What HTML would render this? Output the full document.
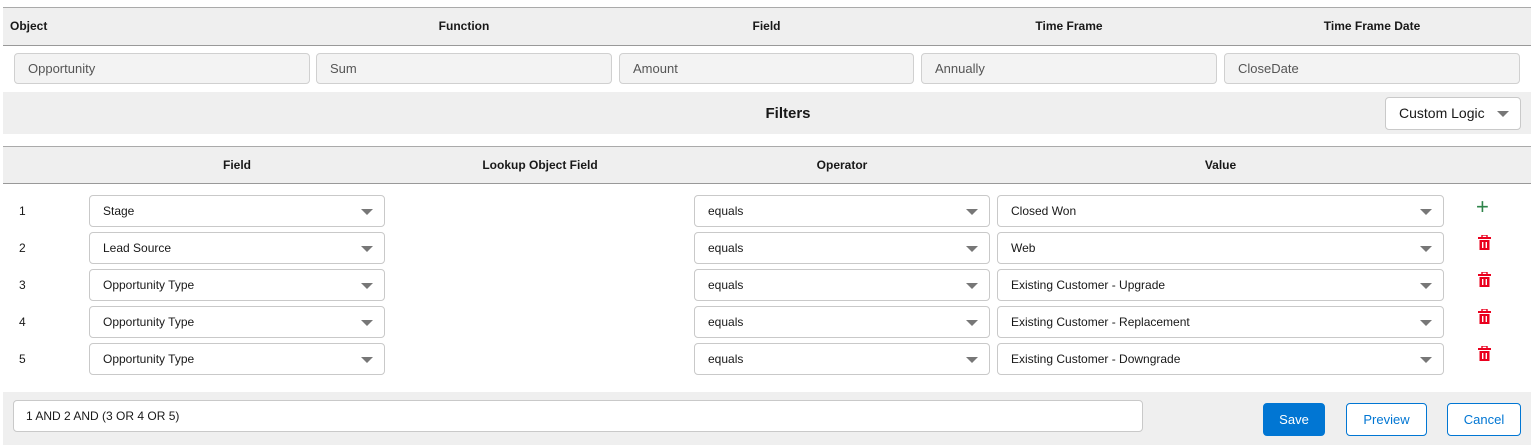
<!DOCTYPE html>
<html><head><style>
body{margin:0;width:1536px;height:445px;background:#fff;font-family:"Liberation Sans",sans-serif;color:#181818;position:relative;overflow:hidden}
.abs{position:absolute}
.band{position:absolute;left:3px;width:1528px;background:#efefef}
.hdr{font-size:12px;font-weight:bold;position:absolute}
.inp{position:absolute;height:31px;border:1px solid #d0d0d0;border-radius:4px;background:#f3f3f3;box-sizing:border-box;font-size:13px;color:#555;padding-left:13px;line-height:30px;top:53px}
.sel{position:absolute;height:32px;border:1px solid #c9c9c9;border-radius:4px;background:#fff;box-sizing:border-box;font-size:12px;color:#181818;padding-left:13px;line-height:30px}
.sel:after{content:"";position:absolute;right:11px;top:13px;border-left:6px solid transparent;border-right:6px solid transparent;border-top:6px solid #777}
.num{position:absolute;left:19px;font-size:12px}
.btn{position:absolute;top:403px;height:33px;box-sizing:border-box;border-radius:4px;font-size:13px;text-align:center;line-height:31px}
</style></head><body>
<div class="band" style="top:7px;height:37px;border-top:1px solid #aaa;border-bottom:1px solid #999"></div>
<div class="hdr" style="left:10px;top:19px">Object</div>
<div class="hdr" style="left:316px;width:296px;text-align:center;top:19px">Function</div>
<div class="hdr" style="left:619px;width:295px;text-align:center;top:19px">Field</div>
<div class="hdr" style="left:921px;width:296px;text-align:center;top:19px">Time Frame</div>
<div class="hdr" style="left:1224px;width:296px;text-align:center;top:19px">Time Frame Date</div>
<div class="inp" style="left:14px;width:296px">Opportunity</div>
<div class="inp" style="left:316px;width:296px">Sum</div>
<div class="inp" style="left:619px;width:295px">Amount</div>
<div class="inp" style="left:921px;width:296px">Annually</div>
<div class="inp" style="left:1224px;width:296px">CloseDate</div>
<div class="band" style="top:92px;height:42px"></div>
<div class="abs" style="left:0;width:1576px;text-align:center;top:105px;font-size:15px;font-weight:bold">Filters</div>
<div class="sel" style="left:1385px;top:97px;width:136px;height:33px;font-size:14px;line-height:31px;border-radius:4px">Custom Logic</div>
<div class="band" style="top:146px;height:36px;border-top:1px solid #aaa;border-bottom:1px solid #999"></div>
<div class="hdr" style="left:89px;width:296px;text-align:center;top:158px">Field</div>
<div class="hdr" style="left:392px;width:296px;text-align:center;top:158px">Lookup Object Field</div>
<div class="hdr" style="left:694px;width:296px;text-align:center;top:158px">Operator</div>
<div class="hdr" style="left:997px;width:447px;text-align:center;top:158px">Value</div>

<div class="num" style="top:204px">1</div>
<div class="sel" style="left:89px;top:195px;width:296px">Stage</div>
<div class="sel" style="left:694px;top:195px;width:296px">equals</div>
<div class="sel" style="left:997px;top:195px;width:447px">Closed Won</div>
<div class="abs" style="left:1476px;top:196px;font-size:22px;color:#2e844a;line-height:22px">+</div>

<div class="num" style="top:241px">2</div>
<div class="sel" style="left:89px;top:232px;width:296px">Lead Source</div>
<div class="sel" style="left:694px;top:232px;width:296px">equals</div>
<div class="sel" style="left:997px;top:232px;width:447px">Web</div>

<div class="num" style="top:278px">3</div>
<div class="sel" style="left:89px;top:269px;width:296px">Opportunity Type</div>
<div class="sel" style="left:694px;top:269px;width:296px">equals</div>
<div class="sel" style="left:997px;top:269px;width:447px">Existing Customer - Upgrade</div>

<div class="num" style="top:315px">4</div>
<div class="sel" style="left:89px;top:306px;width:296px">Opportunity Type</div>
<div class="sel" style="left:694px;top:306px;width:296px">equals</div>
<div class="sel" style="left:997px;top:306px;width:447px">Existing Customer - Replacement</div>

<div class="num" style="top:352px">5</div>
<div class="sel" style="left:89px;top:343px;width:296px">Opportunity Type</div>
<div class="sel" style="left:694px;top:343px;width:296px">equals</div>
<div class="sel" style="left:997px;top:343px;width:447px">Existing Customer - Downgrade</div>

<svg class="abs" style="left:1478px;top:235px" width="13" height="15" viewBox="0 0 13 15"><rect x="0" y="2" width="13" height="2" fill="#ea001e"/><rect x="4" y="0" width="5" height="3" fill="none" stroke="#ea001e" stroke-width="1.4"/><rect x="1.5" y="5" width="10" height="10" fill="#ea001e"/><rect x="4" y="7" width="1.4" height="6" fill="#fff"/><rect x="7.6" y="7" width="1.4" height="6" fill="#fff"/></svg>
<svg class="abs" style="left:1478px;top:272px" width="13" height="15" viewBox="0 0 13 15"><rect x="0" y="2" width="13" height="2" fill="#ea001e"/><rect x="4" y="0" width="5" height="3" fill="none" stroke="#ea001e" stroke-width="1.4"/><rect x="1.5" y="5" width="10" height="10" fill="#ea001e"/><rect x="4" y="7" width="1.4" height="6" fill="#fff"/><rect x="7.6" y="7" width="1.4" height="6" fill="#fff"/></svg>
<svg class="abs" style="left:1478px;top:309px" width="13" height="15" viewBox="0 0 13 15"><rect x="0" y="2" width="13" height="2" fill="#ea001e"/><rect x="4" y="0" width="5" height="3" fill="none" stroke="#ea001e" stroke-width="1.4"/><rect x="1.5" y="5" width="10" height="10" fill="#ea001e"/><rect x="4" y="7" width="1.4" height="6" fill="#fff"/><rect x="7.6" y="7" width="1.4" height="6" fill="#fff"/></svg>
<svg class="abs" style="left:1478px;top:346px" width="13" height="15" viewBox="0 0 13 15"><rect x="0" y="2" width="13" height="2" fill="#ea001e"/><rect x="4" y="0" width="5" height="3" fill="none" stroke="#ea001e" stroke-width="1.4"/><rect x="1.5" y="5" width="10" height="10" fill="#ea001e"/><rect x="4" y="7" width="1.4" height="6" fill="#fff"/><rect x="7.6" y="7" width="1.4" height="6" fill="#fff"/></svg>

<div class="band" style="top:392px;height:53px"></div>
<div class="abs" style="left:13px;top:400px;width:1130px;height:32px;box-sizing:border-box;border:1px solid #c9c9c9;border-radius:4px;background:#fff;font-size:12px;line-height:30px;padding-left:12px">1 AND 2 AND (3 OR 4 OR 5)</div>
<div class="btn" style="left:1263px;width:62px;background:#0176d3;color:#fff;border:1px solid #0176d3">Save</div>
<div class="btn" style="left:1346px;width:81px;background:#fff;color:#0176d3;border:1px solid #0176d3">Preview</div>
<div class="btn" style="left:1447px;width:74px;background:#fff;color:#0176d3;border:1px solid #0176d3">Cancel</div>
</body></html>
